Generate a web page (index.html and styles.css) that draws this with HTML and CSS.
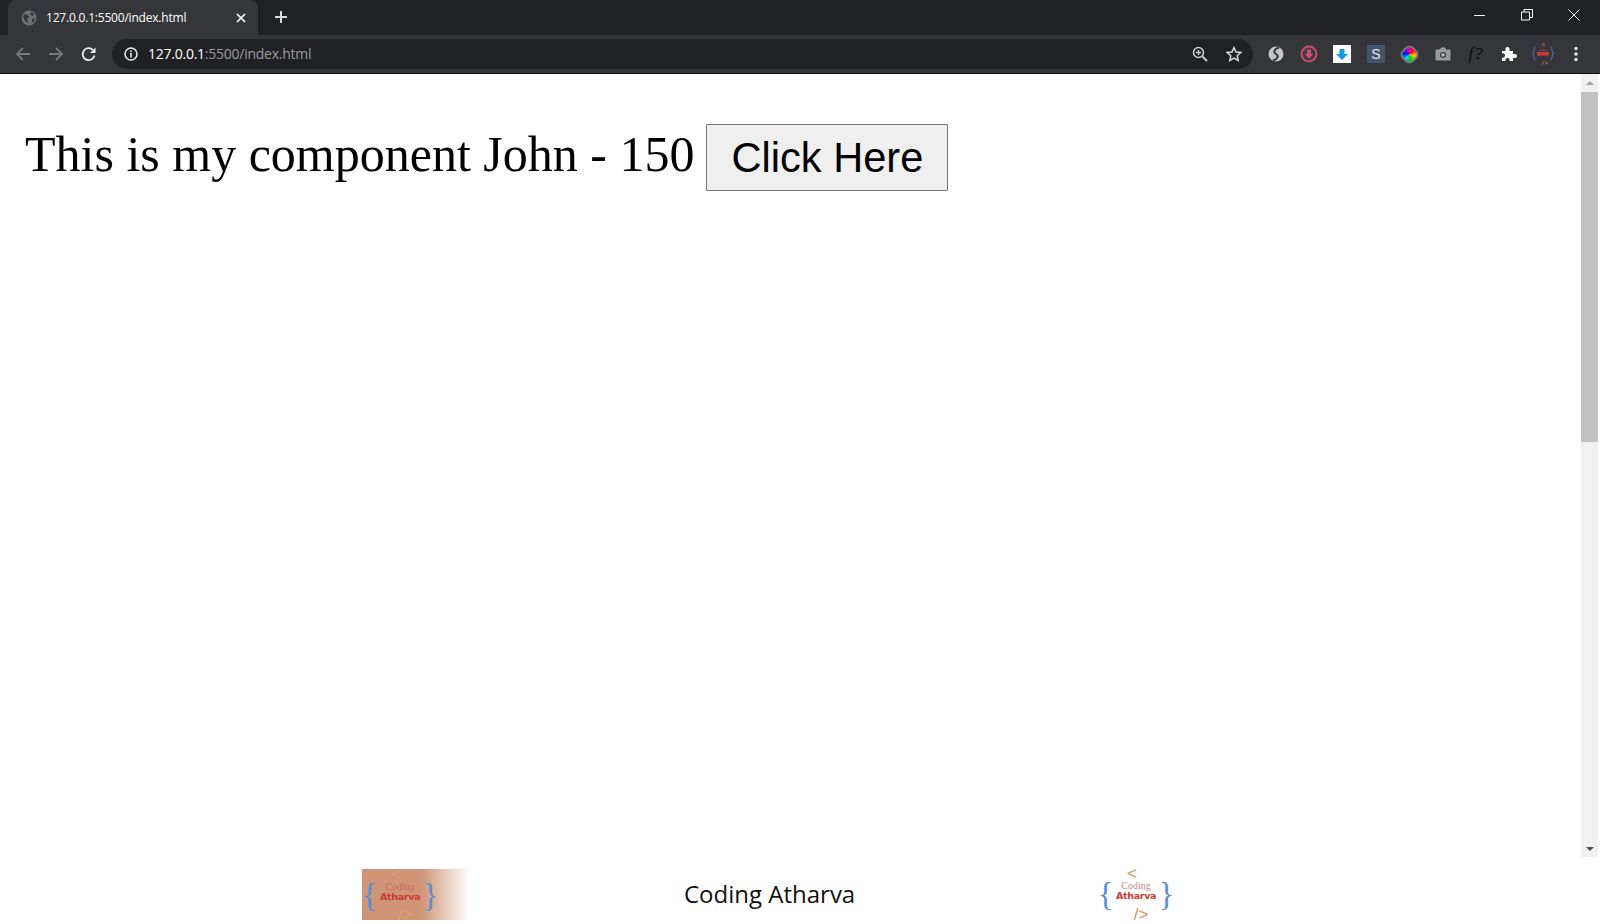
FILE: index.html
```html
<!DOCTYPE html>
<html>
<head>
<meta charset="UTF-8">
<title>127.0.0.1:5500/index.html</title>
<link rel="stylesheet" href="styles.css">
</head>
<body>
<div class="chrome">
    <div class="tabstrip">
        <div class="tab">
            <svg class="favicon" width="16" height="16" viewBox="0 0 16 16"><circle cx="8" cy="8" r="7.5" fill="#6e7073"/><path d="M3 4l4 1 1 2-2 2 1 4-3-2-2-4zM10 2l3 2-1 2-3-1zM11 9l3-1-1 4-2 1z" fill="#36383c"/></svg>
            <span class="tab-title">127.0.0.1:5500/index.html</span>
            <svg class="tab-close" width="10" height="10" viewBox="0 0 10 10"><path d="M1 1l8 8M9 1l-8 8" stroke="#fff" stroke-width="1.7"/></svg>
        </div>
        <svg class="new-tab" width="14" height="14" viewBox="0 0 14 14"><path d="M7 1v12M1 7h12" stroke="#d8d9da" stroke-width="2"/></svg>
        <div class="win-btns">
            <svg width="12" height="12" viewBox="0 0 12 12"><path d="M0 6.500h11" stroke="#fff"/></svg>
            <svg width="12" height="12" viewBox="0 0 12 12"><path d="M.5 3h8v8h-8zM3 3V.5h8.500v8H8.500" fill="none" stroke="#fff"/></svg>
            <svg width="12" height="12" viewBox="0 0 12 12"><path d="M.5.500l11 11M11.500.500l-11 11" stroke="#fff"/></svg>
        </div>
    </div>
    <div class="toolbar">
        <svg class="nav" width="16" height="16" viewBox="0 0 16 16"><path d="M15 8H2M8 2L2 8l6 6" fill="none" stroke="#77797c" stroke-width="1.800"/></svg>
        <svg class="nav" width="16" height="16" viewBox="0 0 16 16"><path d="M1 8h13M8 2l6 6-6 6" fill="none" stroke="#77797c" stroke-width="1.800"/></svg>
        <svg class="nav" width="16" height="16" viewBox="0 0 16 16"><path d="M13.500 9.500A6 6 0 1 1 12 4" fill="none" stroke="#e8eaed" stroke-width="1.800"/><path d="M14.500 1.500v5.500H9z" fill="#e8eaed"/></svg>
        <div class="omnibox">
            <svg width="14" height="14" viewBox="0 0 14 14"><circle cx="7" cy="7" r="6" fill="none" stroke="#e8eaed" stroke-width="1.500"/><path d="M7 6v4.500M7 3.500v1.500" stroke="#e8eaed" stroke-width="1.600"/></svg>
            <span class="url"><span class="host">127.0.0.1</span>:5500/index.html</span>
            <svg class="omni-icon" width="16" height="16" viewBox="0 0 16 16"><circle cx="6.500" cy="6.500" r="5" fill="none" stroke="#d0d1d3" stroke-width="1.500"/><path d="M10.500 10.500L15 15" stroke="#d0d1d3" stroke-width="1.800"/><path d="M4 6.500h5M6.500 4v5" stroke="#d0d1d3" stroke-width="1.300"/></svg>
            <svg class="omni-icon" width="16" height="16" viewBox="0 0 16 16"><path d="M8 1.500l2 4.500 4.800.500-3.600 3.200 1 4.800L8 12.100l-4.200 2.400 1-4.800L1.200 6.500 6 6z" fill="none" stroke="#d8d9da" stroke-width="1.500"/></svg>
        </div>
        <div class="extensions">
            <div class="ext"><svg width="16" height="16" viewBox="0 0 16 16"><circle cx="8" cy="8" r="7.500" fill="#c4c5c7"/><path d="M11 1.500C6 3 5 6 8 8s2 5-3 6.500" fill="none" stroke="#36383c" stroke-width="2"/></svg></div>
            <div class="ext"><svg width="18" height="18" viewBox="0 0 18 18"><circle cx="9" cy="9" r="7.500" fill="#4a3540" stroke="#c2506e" stroke-width="2"/><path d="M7 4.500h4V9h2.500L9 13.500 4.500 9H7z" fill="#c2506e"/></svg></div>
            <div class="ext"><svg width="18" height="18" viewBox="0 0 18 18"><rect width="18" height="18" fill="#fff"/><path d="M6.500 4h5v5H15l-6 6-6-6h3.500z" fill="#0a9bec"/></svg></div>
            <div class="ext"><svg width="18" height="18" viewBox="0 0 18 18"><rect width="18" height="18" fill="#44546a"/><text x="9" y="14" class="ext-s" text-anchor="middle">S</text></svg></div>
            <div class="ext"><span class="wheel"></span></div>
            <div class="ext"><svg width="16" height="14" viewBox="0 0 16 14"><path d="M1.500 2.500h3.500L6 .5h4l1 2h3.500a1 1 0 0 1 1 1v9a1 1 0 0 1-1 1h-13a1 1 0 0 1-1-1v-9a1 1 0 0 1 1-1z" fill="#9a9b9d"/><circle cx="8" cy="8" r="3" fill="#36383c"/><circle cx="8" cy="8" r="1.800" fill="#c4c5c7"/></svg></div>
            <div class="ext"><span class="ext-f">f?</span></div>
            <div class="ext"><svg width="16" height="16" viewBox="0 0 16 16"><path d="M1 5h3.500C4 2 5 1 6.500 1S9 2 8.500 5H12v3.200c2.500-.7 4-.2 4 1.800s-1.500 2.500-4 1.800V15H8.500c.5-2-.5-3-2-3s-2.500 1-2 3H1v-3.500C3 12 4 11 4 9.500S3 7 1 7.500z" fill="#fff"/></svg></div>
            <div class="ext">
                <svg width="22" height="24" viewBox="0 0 22 24"><path d="M3.500 5C1.500 5 2.500 10 .8 11.500 2.500 13 1.500 18 3.500 18M18.500 5c2 0 1 5 2.700 6.500-1.700 1.500-.7 6.500-2.700 6.500" fill="none" stroke="#4a6da7" stroke-width="1.200"/><path d="M13 1l-3 1.500 3 1.500M10 23l1.500-4M13 19l3 2-3 1" fill="none" stroke="#a8673a"/><rect x="5" y="10" width="12" height="3.500" fill="#c93b35"/><rect x="7" y="7.500" width="8" height="1.200" fill="#8a4a48"/></svg>
            </div>
            <div class="ext"><svg width="4" height="16" viewBox="0 0 4 16"><circle cx="2" cy="2.500" r="1.700" fill="#e8eaed"/><circle cx="2" cy="8" r="1.700" fill="#e8eaed"/><circle cx="2" cy="13.500" r="1.700" fill="#e8eaed"/></svg></div>
        </div>
    </div>
</div>

<div class="viewport">
    <div class="page">
        <span class="line">This is my component John - 150</span>
        <button class="big-btn">Click Here</button>
    </div>
    <div class="scrollbar">
        <span class="arrow-up"></span>
        <div class="thumb"></div>
        <span class="arrow-down"></span>
    </div>
</div>

<div class="footer">
    <div class="logo logo-faded">
        <span class="tag tag-open">&lt;</span>
        <div class="logo-mid">
            <span class="brace">{</span>
            <span class="logo-words"><span class="coding">Coding</span><span class="atharva">Atharva</span></span>
            <span class="brace">}</span>
        </div>
        <span class="tag tag-close">/&gt;</span>
    </div>
    <div class="channel">Coding Atharva</div>
    <div class="logo logo-plain">
        <span class="tag tag-open">&lt;</span>
        <div class="logo-mid">
            <span class="brace">{</span>
            <span class="logo-words"><span class="coding">Coding</span><span class="atharva">Atharva</span></span>
            <span class="brace">}</span>
        </div>
        <span class="tag tag-close">/&gt;</span>
    </div>
</div>
</body>
</html>
```

FILE: styles.css
```css
* {
    box-sizing: border-box;
}
html, body {
    margin: 0;
    height: 924px;
    overflow: hidden;
    background: #fff;
}
body {
    display: flex;
    flex-direction: column;
}

/* browser frame */
.chrome {
    flex: none;
    height: 74px;
    background: #35363a;
    border-bottom: 1px solid #0c0c0d;
    font-family: "Open Sans", "Liberation Sans", sans-serif;
}
.tabstrip {
    height: 35px;
    background: #202124;
    display: flex;
    align-items: flex-end;
}
.tab {
    width: 250px;
    height: 35px;
    margin-left: 8px;
    padding: 0 12px 0 13px;
    background: #35363a;
    border-radius: 8px 8px 0 0;
    display: flex;
    align-items: center;
    color: #fff;
    font-size: 12px;
}
.tab-title {
    margin-left: 9px;
    flex: 1;
    letter-spacing: -0.2px;
}
.new-tab {
    margin: 0 0 11px 16px;
}
.win-btns {
    margin-left: auto;
    align-self: flex-start;
    display: flex;
    gap: 35px;
    padding: 9px 20px 0 0;
}
.toolbar {
    height: 38px;
    display: flex;
    align-items: center;
    padding-left: 15px;
}
.nav {
    margin-right: 17px;
}
.omnibox {
    width: 1141px;
    height: 30px;
    margin-left: -2px;
    padding: 0 12px;
    background: #202124;
    border-radius: 15px;
    display: flex;
    align-items: center;
    gap: 10px;
    color: #9a9b9d;
    font-size: 14px;
}
.url {
    flex: 1;
    letter-spacing: -0.25px;
    margin-top: -1px;
}
.host {
    color: #fff;
}
.omni-icon {
    margin-left: 7px;
}
.omni-icon:last-child {
    margin-left: 8px;
    margin-right: -1px;
}
.extensions {
    margin-left: 6px;
    display: flex;
    align-items: center;
}
.ext {
    width: 33.4px;
    height: 26px;
    display: flex;
    align-items: center;
    justify-content: center;
}
.ext-s {
    fill: #e8eaed;
    font: 14px "Liberation Sans", sans-serif;
}
.wheel {
    width: 15px;
    height: 15px;
    background: conic-gradient(#f00, #fc0, #0c0, #0cf, #00f, #c0c, #f00);
    outline: 2px solid #777;
    outline-offset: -1px;
    transform: rotate(45deg) scale(.95);
    border-radius: 35%;
}
.ext-f {
    color: #0b0b0b;
    font: italic 17px "Liberation Serif", serif;
    letter-spacing: 1px;
}

/* page */
.viewport {
    flex: none;
    height: 783px;
    display: flex;
}
.page {
    flex: 1;
    padding: 50px 0 0 25px;
    display: flex;
    align-items: flex-start;
}
.line {
    font: 50px "Liberation Serif", serif;
    line-height: 55px;
    margin-top: 3px;
    color: #000;
}
.big-btn {
    width: 242px;
    height: 67px;
    margin-left: 12px;
    background: #efefef;
    border: 1px solid #767676;
    border-radius: 1px;
    font: 41.600px "Liberation Sans", sans-serif;
    color: #000;
    padding: 0;
}
.scrollbar {
    flex: none;
    width: 17px;
    margin-right: 2px;
    background: #f1f1f1;
    display: flex;
    flex-direction: column;
    align-items: center;
}
.arrow-up, .arrow-down {
    flex: none;
    width: 0;
    height: 0;
    border-left: 4px solid transparent;
    border-right: 4px solid transparent;
}
.arrow-up {
    margin-top: 7px;
    border-bottom: 4px solid #a3a3a3;
}
.arrow-down {
    margin-top: auto;
    margin-bottom: 6px;
    border-top: 4px solid #505050;
}
.thumb {
    flex: none;
    width: 100%;
    height: 350px;
    margin-top: 7px;
    background: #c1c1c1;
}

/* watermark strip */
.footer {
    flex: 1;
    position: relative;
}
.channel {
    position: absolute;
    left: 684px;
    top: 20px;
    font: 24px "Open Sans", sans-serif;
    color: #111;
}
.logo {
    position: absolute;
    display: flex;
    flex-direction: column;
    align-items: center;
    justify-content: space-between;
}
.logo-faded {
    left: 362px;
    top: 12px;
    width: 108px;
    height: 51px;
    padding-right: 32px;
    background: linear-gradient(90deg, #cf9576 55%, #fff 100%);
}
.logo-plain {
    left: 1100px;
    top: 11px;
    width: 72px;
    height: 52px;
}
.logo-mid {
    display: flex;
    align-items: center;
    gap: 2px;
    margin: -4px 0;
}
.brace {
    font: 34px/30px "Liberation Serif", serif;
    color: #5f8fcf;
}
.logo-words {
    display: flex;
    flex-direction: column;
    align-items: center;
    margin-bottom: 6px;
}
.coding {
    font: italic 10px/9px "Liberation Serif", serif;
    color: #c96a5e;
}
.logo-plain .coding {
    font-style: normal;
    color: #c98a7e;
}
.atharva {
    font: bold 9.500px/11px "DejaVu Sans", sans-serif;
    letter-spacing: -0.3px;
    color: #c93b35;
}
.tag {
    font: 17px/11px "Liberation Sans", sans-serif;
    color: #d98f52;
}
.tag-open {
    margin-right: 8px;
}
.tag-close {
    margin-left: 10px;
}
.logo-faded .tag {
    color: #dca072;
}
```
